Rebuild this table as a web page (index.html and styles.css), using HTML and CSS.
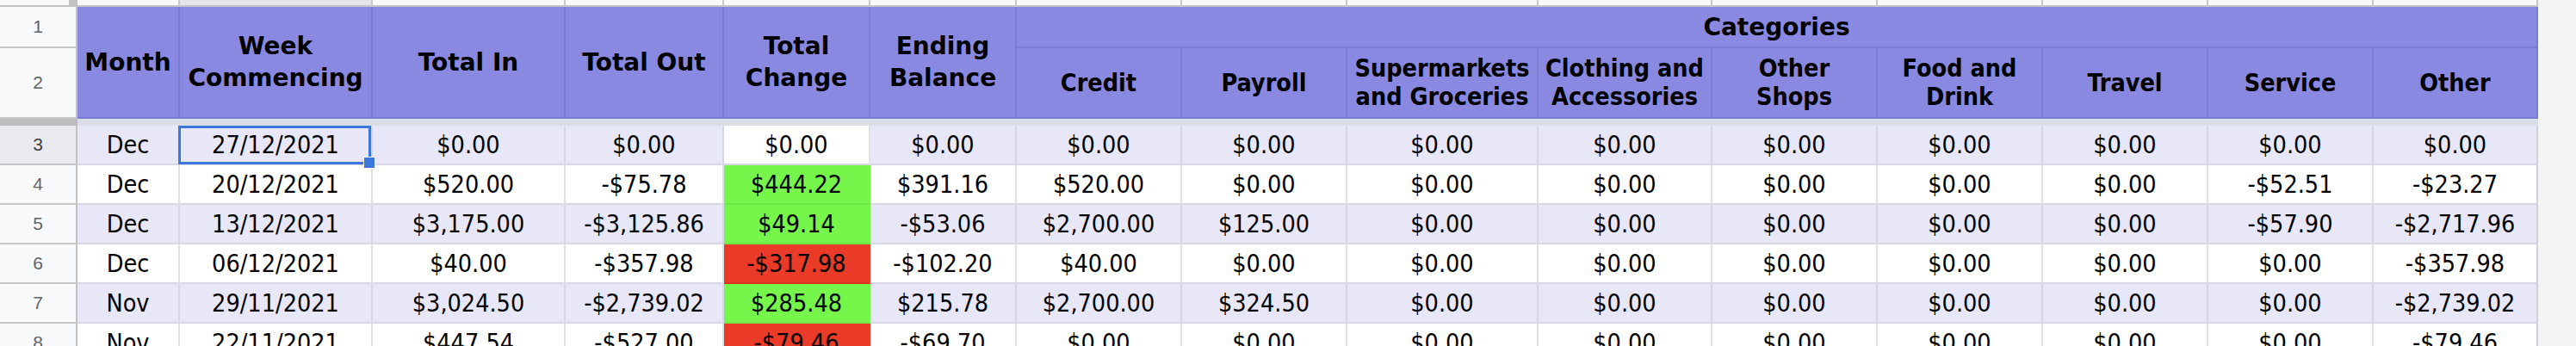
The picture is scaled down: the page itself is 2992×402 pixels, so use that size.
FILE: index.html
```html
<!DOCTYPE html>
<html lang="en">
<head>
<meta charset="utf-8">
<title>Weekly Summary</title>
<link rel="stylesheet" href="styles.css">
</head>
<body>
<div class="sheet">
  <!-- column header strip -->
  <div class="ch corner"></div>
  <div class="ch"></div>
  <div class="ch ch-sel"></div>
  <div class="ch"></div>
  <div class="ch"></div>
  <div class="ch"></div>
  <div class="ch"></div>
  <div class="ch"></div>
  <div class="ch"></div>
  <div class="ch"></div>
  <div class="ch"></div>
  <div class="ch"></div>
  <div class="ch"></div>
  <div class="ch"></div>
  <div class="ch"></div>
  <div class="ch ch-last"></div>

  <!-- row 1 -->
  <div class="rh">1</div>
  <div class="hd hd-tall">Month</div>
  <div class="hd hd-tall">Week<br>Commencing</div>
  <div class="hd hd-tall">Total In</div>
  <div class="hd hd-tall">Total Out</div>
  <div class="hd hd-tall">Total<br>Change</div>
  <div class="hd hd-tall">Ending<br>Balance</div>
  <div class="hd hd-group">Categories</div>

  <!-- row 2 -->
  <div class="rh rh-2">2</div>
  <div class="hd sub">Credit</div>
  <div class="hd sub">Payroll</div>
  <div class="hd sub">Supermarkets<br>and Groceries</div>
  <div class="hd sub">Clothing and<br>Accessories</div>
  <div class="hd sub">Other<br>Shops</div>
  <div class="hd sub">Food and<br>Drink</div>
  <div class="hd sub">Travel</div>
  <div class="hd sub">Service</div>
  <div class="hd sub last">Other</div>

  <!-- freeze band -->
  <div class="band-rh"></div>
  <div class="band"></div>

  <!-- row 3 -->
  <div class="rh rh-sel">3</div>
  <div class="c alt">Dec</div>
  <div class="c alt selcell">27/12/2021<span class="sel"></span><span class="handle"></span></div>
  <div class="c alt">$0.00</div>
  <div class="c alt">$0.00</div>
  <div class="c zero">$0.00</div>
  <div class="c alt">$0.00</div>
  <div class="c alt">$0.00</div>
  <div class="c alt">$0.00</div>
  <div class="c alt">$0.00</div>
  <div class="c alt">$0.00</div>
  <div class="c alt">$0.00</div>
  <div class="c alt">$0.00</div>
  <div class="c alt">$0.00</div>
  <div class="c alt">$0.00</div>
  <div class="c alt last">$0.00</div>

  <!-- row 4 -->
  <div class="rh">4</div>
  <div class="c">Dec</div>
  <div class="c">20/12/2021</div>
  <div class="c">$520.00</div>
  <div class="c">-$75.78</div>
  <div class="c pos">$444.22</div>
  <div class="c">$391.16</div>
  <div class="c">$520.00</div>
  <div class="c">$0.00</div>
  <div class="c">$0.00</div>
  <div class="c">$0.00</div>
  <div class="c">$0.00</div>
  <div class="c">$0.00</div>
  <div class="c">$0.00</div>
  <div class="c">-$52.51</div>
  <div class="c last">-$23.27</div>

  <!-- row 5 -->
  <div class="rh">5</div>
  <div class="c alt">Dec</div>
  <div class="c alt">13/12/2021</div>
  <div class="c alt">$3,175.00</div>
  <div class="c alt">-$3,125.86</div>
  <div class="c pos">$49.14</div>
  <div class="c alt">-$53.06</div>
  <div class="c alt">$2,700.00</div>
  <div class="c alt">$125.00</div>
  <div class="c alt">$0.00</div>
  <div class="c alt">$0.00</div>
  <div class="c alt">$0.00</div>
  <div class="c alt">$0.00</div>
  <div class="c alt">$0.00</div>
  <div class="c alt">-$57.90</div>
  <div class="c alt last">-$2,717.96</div>

  <!-- row 6 -->
  <div class="rh">6</div>
  <div class="c">Dec</div>
  <div class="c">06/12/2021</div>
  <div class="c">$40.00</div>
  <div class="c">-$357.98</div>
  <div class="c neg">-$317.98</div>
  <div class="c">-$102.20</div>
  <div class="c">$40.00</div>
  <div class="c">$0.00</div>
  <div class="c">$0.00</div>
  <div class="c">$0.00</div>
  <div class="c">$0.00</div>
  <div class="c">$0.00</div>
  <div class="c">$0.00</div>
  <div class="c">$0.00</div>
  <div class="c last">-$357.98</div>

  <!-- row 7 -->
  <div class="rh">7</div>
  <div class="c alt">Nov</div>
  <div class="c alt">29/11/2021</div>
  <div class="c alt">$3,024.50</div>
  <div class="c alt">-$2,739.02</div>
  <div class="c pos">$285.48</div>
  <div class="c alt">$215.78</div>
  <div class="c alt">$2,700.00</div>
  <div class="c alt">$324.50</div>
  <div class="c alt">$0.00</div>
  <div class="c alt">$0.00</div>
  <div class="c alt">$0.00</div>
  <div class="c alt">$0.00</div>
  <div class="c alt">$0.00</div>
  <div class="c alt">$0.00</div>
  <div class="c alt last">-$2,739.02</div>

  <!-- row 8 -->
  <div class="rh">8</div>
  <div class="c">Nov</div>
  <div class="c">22/11/2021</div>
  <div class="c">$447.54</div>
  <div class="c">-$527.00</div>
  <div class="c neg">-$79.46</div>
  <div class="c">-$69.70</div>
  <div class="c">$0.00</div>
  <div class="c">$0.00</div>
  <div class="c">$0.00</div>
  <div class="c">$0.00</div>
  <div class="c">$0.00</div>
  <div class="c">$0.00</div>
  <div class="c">$0.00</div>
  <div class="c">$0.00</div>
  <div class="c last">-$79.46</div>
</div>
</body>
</html>
```

FILE: styles.css
```css
html, body {
  margin: 0;
  padding: 0;
  background: #f3f3f3;
  height: 402px;
  overflow: hidden;
}

.sheet {
  display: grid;
  width: 2948px;
  grid-template-columns: 90px 119px 224px 224px 184px 170px 170px 192px 192px 222px 202px 192px 192px 192px 192px 191px;
  grid-template-rows: 8px 48px 82px 8px repeat(6, 46px);
  background: #ffffff;
}

.sheet > div {
  box-sizing: border-box;
  display: flex;
  align-items: center;
  justify-content: center;
  text-align: center;
}

/* column header strip */
.ch {
  background: #f8f9fa;
  border-right: 2px solid #c7c7c7;
  border-bottom: 2px solid #c4c4c4;
}
.ch.corner {
  border-right: 10px solid #c2c2c2;
}
.ch.ch-sel {
  background: #e3e5e8;
}

/* row headers */
.rh {
  background: #f8f9fa;
  border-right: 2px solid #c2c2c2;
  border-bottom: 2px solid #c6c6c6;
  color: #5f6368;
  font-family: "Liberation Sans", Arial, sans-serif;
  font-size: 21px;
}
.rh.rh-sel {
  background: #e8eaed;
  color: #3c4043;
}

/* purple header cells */
.hd {
  background: #8989e2;
  border-right: 2px solid #7b7bd1;
  border-bottom: 2px solid #7b7bd1;
  color: #000;
  font-family: "DejaVu Sans", Verdana, sans-serif;
  font-weight: bold;
  font-size: 28px;
  line-height: 37px;
}
.hd-tall {
  grid-row: span 2;
}
.hd-group {
  grid-column: span 9;
}
.hd.sub {
  font-family: "DejaVu Sans Condensed", "DejaVu Sans", sans-serif;
  font-stretch: condensed;
  font-size: 28.5px;
  line-height: 33px;
}

/* freeze band */
.band-rh {
  background: #bdbdbd;
}
.band {
  grid-column: span 15;
  background: #dadee8;
}

/* data cells */
.c {
  background: #ffffff;
  border-right: 2px solid #e1e1e3;
  border-bottom: 2px solid #d8d8e4;
  color: #000;
  font-family: "DejaVu Sans Condensed", "DejaVu Sans", sans-serif;
  font-stretch: condensed;
  font-size: 28.5px;
  white-space: nowrap;
}
.c.alt {
  background: #e8e7f8;
  border-right-color: #d6d6e6;
}
.c.zero {
  background: #ffffff;
  border-right-color: #e1e1e3;
}
.c.pos {
  background: #76f54b;
  border-right-color: #76f54b;
  border-bottom-color: #6ee445;
}
.c.neg {
  background: #ea3a28;
  border-right-color: #ea3a28;
  border-bottom-color: #d93526;
}
.c.last {
  border-right-color: #cfcfd9;
}

/* selection */
.selcell {
  position: relative;
}
.sel {
  position: absolute;
  left: -2px;
  top: 0;
  width: 224px;
  height: 45px;
  border: 3px solid #3b77dc;
  box-sizing: border-box;
}
.handle {
  position: absolute;
  left: 213px;
  top: 36px;
  width: 14px;
  height: 14px;
  background: #3b77dc;
  border: 1px solid #ffffff;
  box-sizing: border-box;
}
```
